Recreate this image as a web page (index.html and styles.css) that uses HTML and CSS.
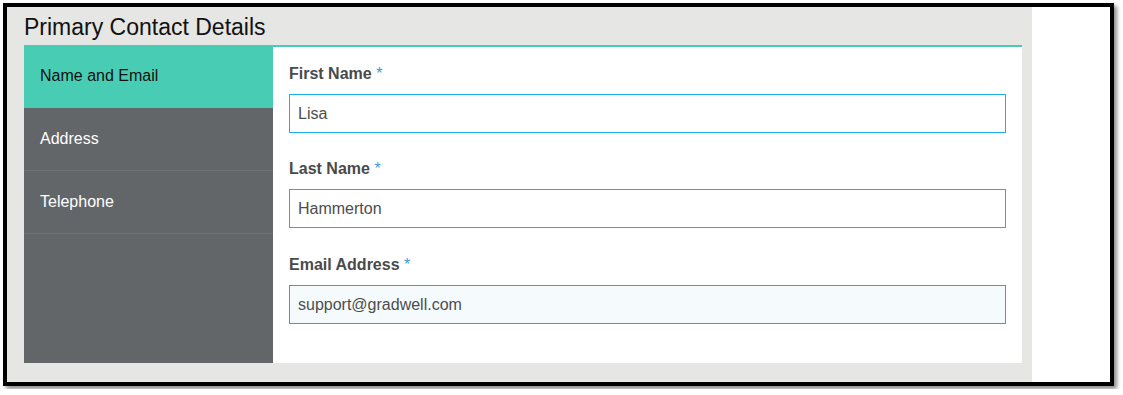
FILE: index.html
```html
<!DOCTYPE html>
<html lang="en">
<head>
    <meta charset="UTF-8">
    <meta name="viewport" content="width=device-width, initial-scale=1.0">
    <title>Primary Contact Details</title>
    <link rel="stylesheet" href="styles.css">
</head>
<body>
    <div class="frame">
        <div class="panel">
            <div class="panel-title">Primary Contact Details</div>
            <div class="tabs">
                <div class="tab-list">
                    <div class="tab active">Name and Email</div>
                    <div class="tab">Address</div>
                    <div class="tab">Telephone</div>
                </div>
                <div class="tab-body">
                    <div class="field">
                        <label class="field-label" for="firstName">First Name <span class="req">*</span></label>
                        <input class="field-input" id="firstName" type="text" value="Lisa">
                    </div>
                    <div class="field">
                        <label class="field-label" for="lastName">Last Name <span class="req">*</span></label>
                        <input class="field-input" id="lastName" type="text" value="Hammerton">
                    </div>
                    <div class="field last">
                        <label class="field-label" for="email">Email Address <span class="req">*</span></label>
                        <input class="field-input filled" id="email" type="text" value="support@gradwell.com">
                    </div>
                </div>
            </div>
        </div>
    </div>
</body>
</html>
```

FILE: styles.css
```css
body {
    margin: 0;
    background-color: #fff;
    font-family: 'Liberation Sans', Arial, sans-serif;
}
.frame {
    margin: 3px;
    width: 1103px;
    height: 375px;
    border: 4px solid #000;
    box-shadow: 3px 3px 4px rgba(0, 0, 0, 0.45);
    background-color: #fff;
    display: flex;
}
.panel {
    width: 1025px;
    box-sizing: border-box;
    padding: 0 10px 19px 17px;
    background-color: #e6e6e4;
}
.panel-title {
    font-size: 23px;
    line-height: 35px;
    padding-top: 3px;
    color: #111;
}
.tabs { display: flex; }
.tab-list {
    width: 249px;
    background-color: #636669;
}
.tab {
    height: 61px;
    padding: 0 0 1px 16px;
    border-bottom: 1px solid #6f7377;
    display: flex;
    align-items: center;
    font-size: 16px;
    color: #fff;
}
.tab.active {
    background-color: #48cdb4;
    border-bottom-color: #48cdb4;
    color: #111;
}
.tab-body {
    flex: 1;
    background-color: #fff;
    border-top: 2px solid #48cdb4;
    padding: 17px 16px 39px 16px;
}
.field + .field { margin-top: 26px; }
.field.last { margin-top: 27px; }
.field-label {
    display: block;
    font-size: 16px;
    line-height: 20px;
    font-weight: bold;
    color: #4a4a4a;
    margin-bottom: 10px;
}
.req { color: #3a9ad9; font-weight: normal; }
.field-input {
    display: block;
    width: 100%;
    height: 39px;
    box-sizing: border-box;
    border: 1px solid #1ab2e2;
    padding: 0 8px;
    margin: 0;
    font-family: 'Liberation Sans', Arial, sans-serif;
    font-size: 16px;
    color: #4d4d4d;
    background-color: #fff;
    outline: none;
}
.field-input.filled {
    background-color: #f5fafd;
    border-color: #2ea4d4;
}
```
